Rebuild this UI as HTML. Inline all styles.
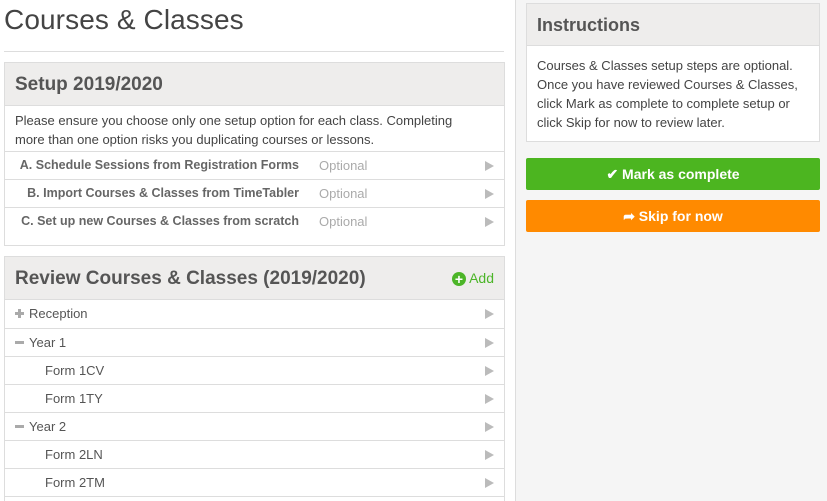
<!DOCTYPE html>
<html><head><style>
*{box-sizing:border-box;margin:0;padding:0}
html,body{width:827px;height:501px;overflow:hidden}
body{background:#fff;font-family:"Liberation Sans",sans-serif;color:#555;position:relative}
.a{position:absolute}
h1{position:absolute;left:4px;top:4px;font-size:28px;font-weight:normal;color:#444;letter-spacing:0.1px}
.hr{left:4px;top:51px;width:500px;height:1px;background:#ddd}
.box{border:1px solid #ddd;background:#fff}
.hd{background:#eeedec;border-bottom:1px solid #ddd;font-weight:bold;color:#555;font-size:19px;padding-left:10px}
.row{position:absolute;left:0;right:0;height:28px;border-top:1px solid #ddd;font-size:13px;line-height:27px;color:#555}
.tri{position:absolute;right:10px;top:9px;width:0;height:0;border-left:9px solid #bbb;border-top:5px solid transparent;border-bottom:5px solid transparent}
.opt{position:absolute;left:314px;color:#aaa;font-size:13px}
.sb{font-weight:bold;color:#666;position:absolute;right:205px;font-size:12.5px}
.btn{position:absolute;left:526px;width:294px;height:32px;border-radius:2px;color:#fff;font-weight:bold;font-size:14px;text-align:center;line-height:32px}
.pm{display:inline-block;width:9px;height:9px;position:relative;margin-right:5px;vertical-align:0}
.pm:before{content:"";position:absolute;left:0;top:3px;width:9px;height:3px;background:#aaa}
.pl:after{content:"";position:absolute;left:3px;top:0;width:3px;height:9px;background:#aaa}
</style></head><body>
<h1>Courses &amp; Classes</h1>
<div class="a hr"></div>
<div class="a box" style="left:4px;top:62px;width:501px;height:184px">
 <div class="hd" style="height:43px;line-height:43px">Setup 2019/2020</div>
 <div style="font-size:13px;line-height:19px;padding:5px 38px 0 10px;color:#444">Please ensure you choose only one setup option for each class. Completing more than one option risks you duplicating courses or lessons.</div>
 <div class="row" style="top:88px"><span class="sb">A. Schedule Sessions from Registration Forms</span><span class="opt">Optional</span><i class="tri"></i></div>
 <div class="row" style="top:116px"><span class="sb">B. Import Courses &amp; Classes from TimeTabler</span><span class="opt">Optional</span><i class="tri"></i></div>
 <div class="row" style="top:144px"><span class="sb">C. Set up new Courses &amp; Classes from scratch</span><span class="opt">Optional</span><i class="tri"></i></div>
</div>
<div class="a box" style="left:4px;top:256px;width:501px;height:245px;border-bottom:none;overflow:hidden">
 <div class="hd" style="height:43px;line-height:43px;border-bottom:none">Review Courses &amp; Classes (2019/2020)
  <span style="position:absolute;right:10px;top:0;font-size:14px;font-weight:normal;color:#4cb528"><span style="display:inline-block;width:14px;height:14px;border-radius:50%;background:#4cb528;color:#fff;font-size:14px;line-height:14px;text-align:center;font-weight:bold;vertical-align:-1px">+</span> Add</span></div>
 <div class="row" style="top:42px;padding-left:10px"><i class="pm pl"></i>Reception<i class="tri"></i></div>
 <div class="row" style="top:71px;padding-left:10px"><i class="pm"></i>Year 1<i class="tri"></i></div>
 <div class="row" style="top:99px;padding-left:40px">Form 1CV<i class="tri"></i></div>
 <div class="row" style="top:127px;padding-left:40px">Form 1TY<i class="tri"></i></div>
 <div class="row" style="top:155px;padding-left:10px"><i class="pm"></i>Year 2<i class="tri"></i></div>
 <div class="row" style="top:183px;padding-left:40px">Form 2LN<i class="tri"></i></div>
 <div class="row" style="top:211px;padding-left:40px">Form 2TM<i class="tri"></i></div>
 <div class="row" style="top:239px"></div>
</div>
<div class="a" style="left:515px;top:0;width:312px;height:501px;background:#f5f5f5;border-left:1px solid #ddd"></div>
<div class="a box" style="left:526px;top:3px;width:294px;height:139px">
 <div class="hd" style="height:42px;line-height:42px;font-size:18px">Instructions</div>
 <div style="font-size:13px;line-height:19px;padding:10px 10px 0;color:#444">Courses &amp; Classes setup steps are optional. Once you have reviewed Courses &amp; Classes, click Mark as complete to complete setup or click Skip for now to review later.</div>
</div>
<div class="btn" style="top:158px;background:#4cb520">✔ Mark as complete</div>
<div class="btn" style="top:200px;background:#ff8a00">➦ Skip for now</div>
</body></html>
